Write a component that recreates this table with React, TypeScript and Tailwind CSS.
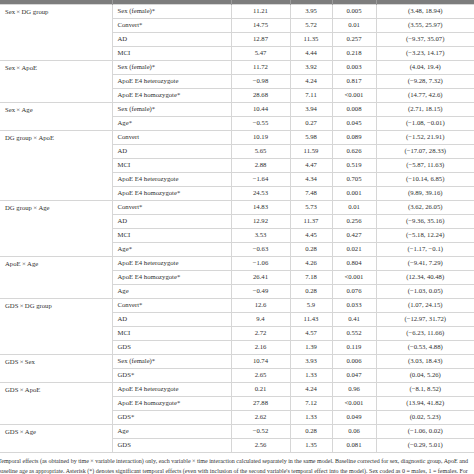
type Row = [string, string, string, string, string];

const groups: { label: string; rows: Row[] }[] = [
  {
    label: "Sex\u2009×\u2009DG group",
    rows: [
      ["Sex (female)*", "11.21", "3.95", "0.005", "(3.48, 18.94)"],
      ["Convert*", "14.75", "5.72", "0.01", "(3.55, 25.97)"],
      ["AD", "12.87", "11.35", "0.257", "(−9.37, 35.07)"],
      ["MCI", "5.47", "4.44", "0.218", "(−3.23, 14.17)"],
    ],
  },
  {
    label: "Sex\u2009×\u2009ApoE",
    rows: [
      ["Sex (female)*", "11.72", "3.92", "0.003", "(4.04, 19.4)"],
      ["ApoE E4 heterozygote", "−0.98", "4.24", "0.817", "(−9.28, 7.32)"],
      ["ApoE E4 homozygote*", "28.68", "7.11", "<0.001", "(14.77, 42.6)"],
    ],
  },
  {
    label: "Sex\u2009×\u2009Age",
    rows: [
      ["Sex (female)*", "10.44", "3.94", "0.008", "(2.71, 18.15)"],
      ["Age*", "−0.55", "0.27", "0.045", "(−1.08, −0.01)"],
    ],
  },
  {
    label: "DG group\u2009×\u2009ApoE",
    rows: [
      ["Convert", "10.19", "5.98", "0.089", "(−1.52, 21.91)"],
      ["AD", "5.65", "11.59", "0.626", "(−17.07, 28.33)"],
      ["MCI", "2.88", "4.47", "0.519", "(−5.87, 11.63)"],
      ["ApoE E4 heterozygote", "−1.64", "4.34", "0.705", "(−10.14, 6.85)"],
      ["ApoE E4 homozygote*", "24.53", "7.48", "0.001", "(9.89, 39.16)"],
    ],
  },
  {
    label: "DG group\u2009×\u2009Age",
    rows: [
      ["Convert*", "14.83", "5.73", "0.01", "(3.62, 26.05)"],
      ["AD", "12.92", "11.37", "0.256", "(−9.36, 35.16)"],
      ["MCI", "3.53", "4.45", "0.427", "(−5.18, 12.24)"],
      ["Age*", "−0.63", "0.28", "0.021", "(−1.17, −0.1)"],
    ],
  },
  {
    label: "ApoE\u2009×\u2009Age",
    rows: [
      ["ApoE E4 heterozygote", "−1.06", "4.26", "0.804", "(−9.41, 7.29)"],
      ["ApoE E4 homozygote*", "26.41", "7.18", "<0.001", "(12.34, 40.48)"],
      ["Age", "−0.49", "0.28", "0.076", "(−1.03, 0.05)"],
    ],
  },
  {
    label: "GDS\u2009×\u2009DG group",
    rows: [
      ["Convert*", "12.6", "5.9", "0.033", "(1.07, 24.15)"],
      ["AD", "9.4", "11.43", "0.41", "(−12.97, 31.72)"],
      ["MCI", "2.72", "4.57", "0.552", "(−6.23, 11.66)"],
      ["GDS", "2.16", "1.39", "0.119", "(−0.53, 4.88)"],
    ],
  },
  {
    label: "GDS\u2009×\u2009Sex",
    rows: [
      ["Sex (female)*", "10.74", "3.93", "0.006", "(3.03, 18.43)"],
      ["GDS*", "2.65", "1.33", "0.047", "(0.04, 5.26)"],
    ],
  },
  {
    label: "GDS\u2009×\u2009ApoE",
    rows: [
      ["ApoE E4 heterozygote", "0.21", "4.24", "0.96", "(−8.1, 8.52)"],
      ["ApoE E4 homozygote*", "27.88", "7.12", "<0.001", "(13.94, 41.82)"],
      ["GDS*", "2.62", "1.33", "0.049", "(0.02, 5.23)"],
    ],
  },
  {
    label: "GDS\u2009×\u2009Age",
    rows: [
      ["Age", "−0.52", "0.28", "0.06", "(−1.06, 0.02)"],
      ["GDS", "2.56", "1.35", "0.081", "(−0.29, 5.01)"],
    ],
  },
];

const cell = "h-[14px] p-0 border border-[#d6d6d6] leading-none";

export default function App() {
  return (
    <div className="w-[474px] h-[474px] overflow-hidden bg-white text-[#2f2f2f] font-['Liberation_Serif',serif] text-[6.7px]">
      <table className="w-[474px] table-fixed border-collapse">
        <colgroup>
          <col className="w-[112px]" />
          <col className="w-[119px]" />
          <col className="w-[59px]" />
          <col className="w-[42px]" />
          <col className="w-[44px]" />
          <col className="w-[98px]" />
        </colgroup>
        <thead>
          <tr>
            {[0, 1, 2, 3, 4, 5].map((i) => (
              <th key={i} className="h-[4px] p-0 bg-[#7d7d7d] border-x border-[#9a9a9a] first:border-l-0 last:border-r-0" />
            ))}
          </tr>
        </thead>
        <tbody>
          {groups.map((g) =>
            g.rows.map((r, i) => (
              <tr key={g.label + i}>
                {i === 0 ? (
                  <td rowSpan={g.rows.length} className={`${cell} border-l-0 align-top pl-[5px] pt-[4px]`}>
                    {g.label}
                  </td>
                ) : null}
                <td className={`${cell} pl-[5px]`}>{r[0]}</td>
                <td className={`${cell} text-center`}>{r[1]}</td>
                <td className={`${cell} text-center`}>{r[2]}</td>
                <td className={`${cell} text-center`}>{r[3]}</td>
                <td className={`${cell} text-center border-r-0`}>{r[4]}</td>
              </tr>
            ))
          )}
        </tbody>
      </table>
      <div className="mt-[3px] ml-[-2px] w-[476px] overflow-hidden text-[6.02px] leading-[10.5px] whitespace-nowrap">
        <p>
          Temporal effects (as obtained by time × variable interaction) only, each variable × time interaction calculated separately in the same model. Baseline corrected for sex, diagnostic group, ApoE and
        </p>
        <p>
          baseline age as appropriate. Asterisk (*) denotes significant temporal effects (even with inclusion of the second variable's temporal effect into the model). Sex coded as 0 = males, 1 = females. For
        </p>
      </div>
    </div>
  );
}
